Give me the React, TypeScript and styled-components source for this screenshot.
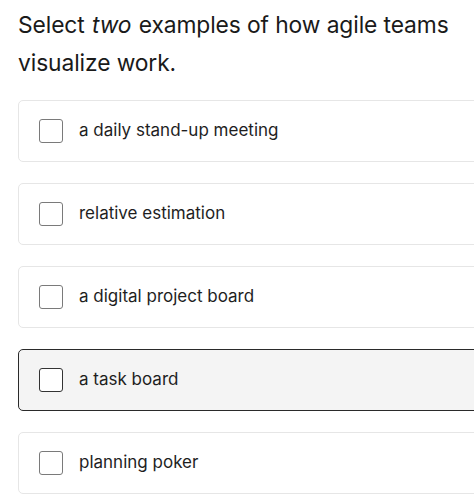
import React, { useState } from "react";
import styled, { createGlobalStyle } from "styled-components";

const Global = createGlobalStyle`
  html, body { margin: 0; padding: 0; background: #ffffff; }
  body { font-family: "Inter", "Liberation Sans", Arial, sans-serif; color: #1c1c1c; overflow: hidden; }
`;

const Page = styled.div`
  width: 474px;
  height: 502px;
  overflow: hidden;
  padding: 6px 0 0 18px;
  box-sizing: border-box;
`;

const Question = styled.h1`
  margin: 0 0 18px 0;
  font-size: 22.8px;
  line-height: 38px;
  font-weight: 400;
  color: #1a1a1a;
  letter-spacing: -0.1px;
`;

const Emph = styled.em`
  font-style: italic;
  display: inline-block;
  padding: 0 1px;
`;

const List = styled.div`
  display: flex;
  flex-direction: column;
  gap: 21px;
  width: 490px;
`;

const Option = styled.label<{ $active: boolean }>`
  display: flex;
  align-items: center;
  gap: 16px;
  height: 62px;
  box-sizing: border-box;
  padding-left: 20px;
  border-radius: 5px;
  border: ${(p) => (p.$active ? "1.5px solid #2a2a2a" : "1px solid #e6e6e6")};
  background: ${(p) => (p.$active ? "#f4f4f4" : "#ffffff")};
  cursor: pointer;
`;

const Box = styled.span<{ $active: boolean }>`
  width: 24px;
  height: 24px;
  box-sizing: border-box;
  border-radius: 3px;
  border: 1.5px solid ${(p) => (p.$active ? "#333" : "#7a7a7a")};
  background: #fff;
  flex: none;
`;

const Label = styled.span`
  font-size: 17px;
  color: #1e1e1e;
  letter-spacing: 0;
  margin-top: -2px;
`;

const options = [
  "a daily stand-up meeting",
  "relative estimation",
  "a digital project board",
  "a task board",
  "planning poker",
];

export default function App() {
  const [active] = useState(3);
  return (
    <Page>
      <Global />
      <Question>
        Select <Emph>two</Emph> examples of how agile teams visualize work.
      </Question>
      <List>
        {options.map((o, i) => (
          <Option key={o} $active={i === active}>
            <Box $active={i === active} />
            <Label>{o}</Label>
          </Option>
        ))}
      </List>
    </Page>
  );
}
